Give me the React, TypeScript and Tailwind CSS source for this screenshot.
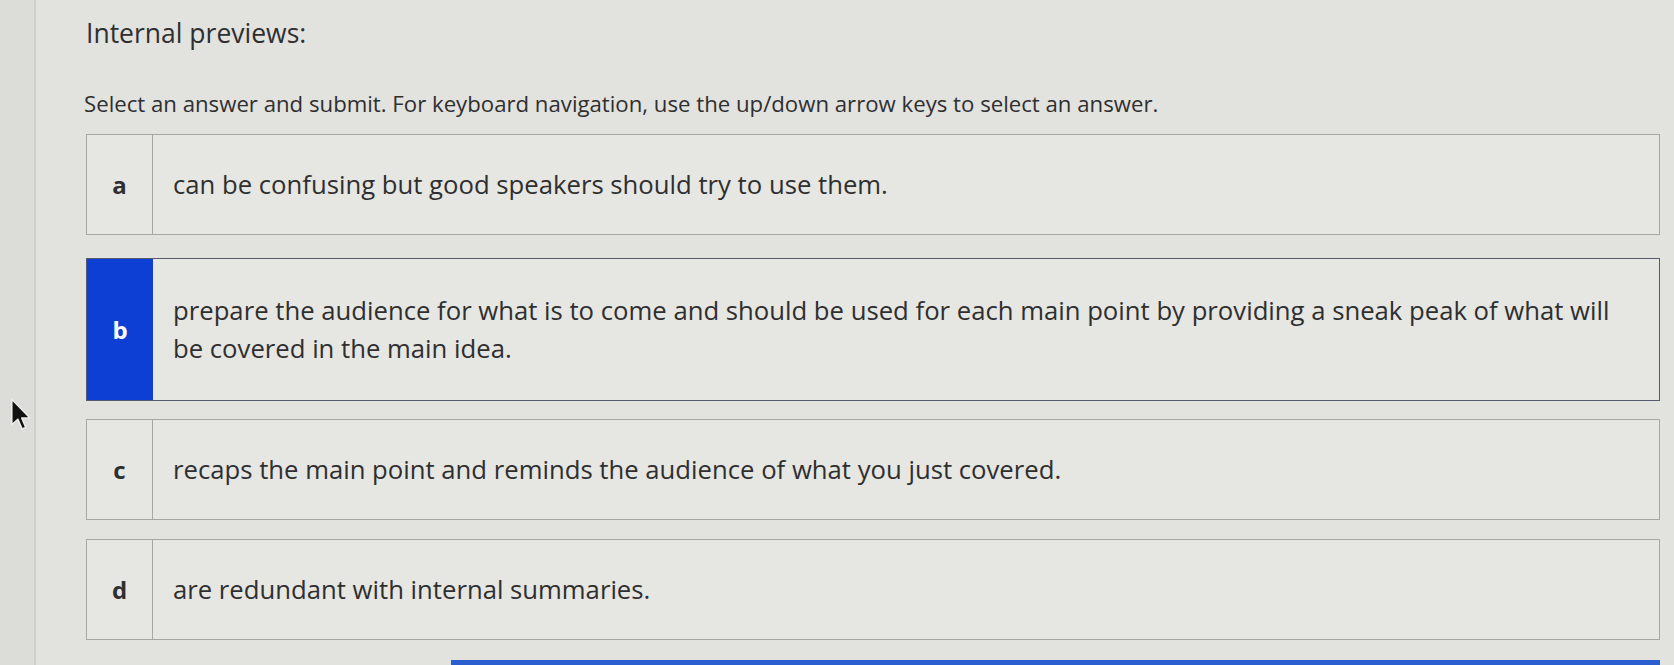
const options = [
  { key: 'a', lines: ['can be confusing but good speakers should try to use them.'], h: 'h-[101px]', gap: '' },
  {
    key: 'b',
    lines: [
      'prepare the audience for what is to come and should be used for each main point by providing a sneak peak of what will',
      'be covered in the main idea.',
    ],
    h: 'h-[143px]',
    gap: 'mt-[23px]',
    selected: true,
  },
  { key: 'c', lines: ['recaps the main point and reminds the audience of what you just covered.'], h: 'h-[101px]', gap: 'mt-[18px]' },
  { key: 'd', lines: ['are redundant with internal summaries.'], h: 'h-[101px]', gap: 'mt-[19px]' },
];

function Cursor() {
  return (
    <svg
      className="absolute left-[8px] top-[398px]"
      width="27"
      height="34"
      viewBox="0 0 20 28"
    >
      <path
        d="M2 1 L2 22 L7 17.5 L10.5 25.5 L13.5 24.2 L10.2 16.5 L17 16.5 Z"
        fill="#111"
        stroke="#ececea"
        strokeWidth="1.3"
        strokeLinejoin="round"
      />
    </svg>
  );
}

export default function App() {
  return (
    <div
      className="relative flex h-[665px] w-full overflow-hidden bg-[#e2e2df] text-[#2f2f2f]"
      style={{ fontFamily: '"Open Sans", "Noto Sans", sans-serif' }}
    >
      {/* monitor bezel on the left */}
      <div className="h-full w-[36px] shrink-0 border-r-2 border-[#cfcfcb] bg-[#dcdcd8]" />

      <div className="flex flex-1 flex-col pl-[50px] pr-[14px]">
        <h1 className="mt-[17px] text-[26.5px] font-medium leading-[32px]">Internal previews:</h1>

        <p className="mt-[40px] -ml-[2px] text-[22.2px] font-medium leading-[30px]">
          Select an answer and submit. For keyboard navigation, use the up/down arrow keys to select an answer.
        </p>

        <div className="mt-[15px] flex flex-col">
          {options.map((o) => (
            <div
              key={o.key}
              className={`flex ${o.h} ${o.gap} ${
                o.selected
                  ? 'border-[1.5px] border-[#565b6e]'
                  : 'border border-[#a6a6a3]'
              } bg-[#e6e6e3]`}
            >
              <div
                className={`flex w-[66px] shrink-0 items-center justify-center text-[24px] font-bold ${
                  o.selected ? 'bg-[#0d3fd4] text-white' : 'border-r border-[#a6a6a3]'
                }`}
              >
                {o.key}
              </div>
              <div className="flex flex-1 flex-col justify-center pl-[20px] pr-[20px] text-[25.7px] font-medium leading-[38px]">
                {o.lines.map((l) => (
                  <span key={l} className="whitespace-nowrap">
                    {l}
                  </span>
                ))}
              </div>
            </div>
          ))}
        </div>

        <div className="mt-auto ml-[365px] h-[5px] bg-[#2b5fd0]" />
      </div>

      <Cursor />
    </div>
  );
}
